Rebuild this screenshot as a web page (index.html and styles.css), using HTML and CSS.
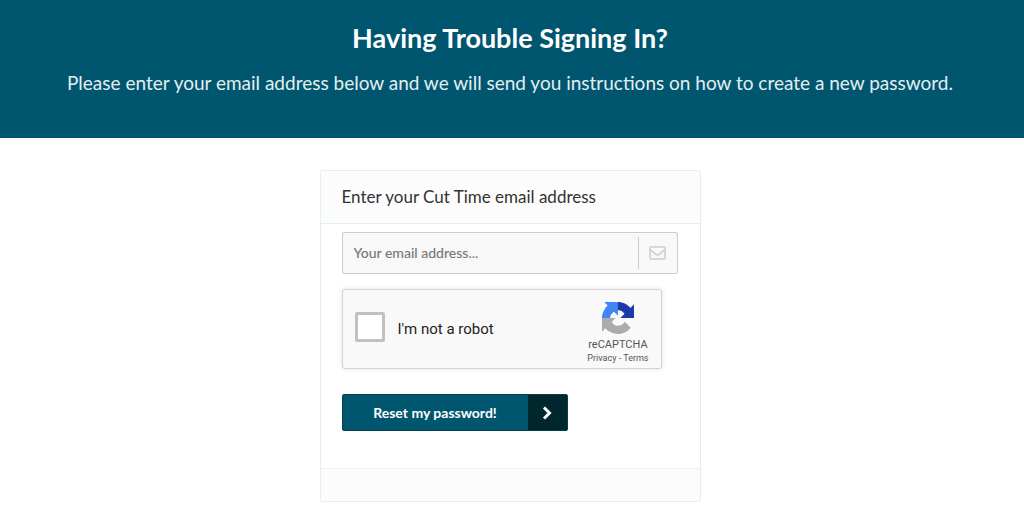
FILE: index.html
```html
<!DOCTYPE html>
<html lang="en">
<head>
  <meta charset="UTF-8" />
  <meta name="viewport" content="width=device-width, initial-scale=1.0" />
  <title>Having Trouble Signing In?</title>
  <link rel="stylesheet" href="styles.css">
</head>
<body>
  <header class="banner">
    <h1>Having Trouble Signing In?</h1>
    <p>Please enter your email address below and we will send you instructions on how to create a new password.</p>
  </header>

  <main class="page">
    <form class="card">
      <div class="card-header">
        <label for="email">Enter your Cut Time email address</label>
      </div>

      <div class="card-body">
        <div class="email-field">
          <input type="email" id="email" name="email" placeholder="Your email address...">
          <span class="email-icon">
            <svg width="17" height="14" viewBox="0 0 17 14" fill="none" stroke="currentColor" stroke-width="1.5" stroke-linejoin="round" aria-hidden="true">
              <rect x="1" y="1" width="15" height="12" rx="1" />
              <path d="M1 3.5l5.500 4.600c1.300 1 2.700 1 4 0L16 3.500" />
            </svg>
          </span>
        </div>

        <div class="captcha">
          <input type="checkbox" id="robot" name="robot">
          <label for="robot">I'm not a robot</label>
          <div class="captcha-brand">
            <svg width="32" height="32" viewBox="0 0 64 64" aria-hidden="true">
              <path fill="#1c3aa9" d="M64 31.955l-.033-1.37V4.687l-7.16 7.16C50.948 4.674 42.033.093 32.05.093c-10.4 0-19.622 4.96-25.458 12.64l11.736 11.86a15.55 15.55 0 0 1 4.754-5.334c2.05-1.6 4.952-2.906 8.968-2.906.485 0 .86.057 1.135.163 4.976.393 9.288 3.14 11.828 7.124l-8.307 8.307L64 31.953" />
              <path fill="#4285f4" d="M31.862.094l-1.37.033H4.594l7.16 7.16C4.58 13.147 0 22.06 0 32.046c0 10.4 4.96 19.622 12.64 25.458L24.5 45.768a15.55 15.55 0 0 1-5.334-4.754c-1.6-2.05-2.906-4.952-2.906-8.968 0-.485.057-.86.163-1.135.393-4.976 3.14-9.288 7.124-11.828l8.307 8.307L31.86.095" />
              <path fill="#ababab" d="M.001 32.045l.033 1.37v25.898l7.16-7.16c5.86 7.173 14.774 11.754 24.76 11.754 10.4 0 19.622-4.96 25.458-12.64l-11.736-11.86a15.55 15.55 0 0 1-4.754 5.334c-2.05 1.6-4.952 2.906-8.968 2.906-.485 0-.86-.057-1.135-.163-4.976-.393-9.288-3.14-11.828-7.124l8.307-8.307c-10.522.04-22.4.066-27.295-.005" />
            </svg>
            <span class="captcha-name">reCAPTCHA</span>
            <span class="captcha-links"><a href="#privacy">Privacy</a> - <a href="#terms">Terms</a></span>
          </div>
        </div>

        <button type="submit" class="reset-button">
          <span class="reset-text">Reset my password!</span>
          <span class="reset-arrow">
            <svg width="11" height="14" viewBox="0 0 11 14" fill="none" stroke="currentColor" stroke-width="3" aria-hidden="true">
              <path d="M2 1.500L7.500 7L2 12.500" />
            </svg>
          </span>
        </button>
      </div>

      <div class="card-footer"></div>
    </form>
  </main>
</body>
</html>
```
FILE: styles.css
```css
* {
  box-sizing: border-box;
}

body {
  margin: 0;
  background: #fff;
  color: #333;
  font-family: Lato, "Open Sans", sans-serif;
}

/* banner */
.banner {
  background: #00566f;
  color: #fff;
  padding: 19px 4px 39px 0;
  text-align: center;
}

.banner h1 {
  margin: 0;
  font-size: 27px;
  line-height: 38px;
  font-weight: 700;
}

.banner p {
  margin: 10px 0 0;
  color: #e4eef1;
  font-size: 19px;
  line-height: 32px;
  font-weight: 400;
}

/* card */
.page {
  padding: 32px 4px 28px 0;
}

.card {
  max-width: 381px;
  margin: 0 auto;
  border: 1px solid #dff0ed;
  border-radius: 2px;
}

.card-header {
  padding: 14px 21px;
  background: #fcfcfc;
  border-bottom: 1px solid #dff0ed;
  font-size: 17px;
  line-height: 24px;
}

.card-body {
  padding: 8px 22px 37px 21px;
}

.card-footer {
  height: 33px;
  background: #fcfcfc;
  border-top: 1px solid #e8f2f2;
}

/* email */
.email-field {
  display: flex;
  align-items: center;
  height: 42px;
  background: #f8f8f8;
  border: 1px solid #ccc;
  border-radius: 2px;
}

.email-field input {
  flex: 1;
  min-width: 0;
  height: 100%;
  padding: 0 11px 2px;
  border: 0;
  background: transparent;
  font: 500 14px Lato, "Open Sans", sans-serif;
}

.email-field input::placeholder {
  color: #777;
}

.email-icon {
  display: flex;
  align-items: center;
  justify-content: center;
  width: 39px;
  height: 32px;
  border-left: 1px solid #ccc;
  color: #ccc;
}

/* captcha */
.captcha {
  display: flex;
  align-items: center;
  max-width: 320px;
  height: 80px;
  margin: 15px 0 25px;
  padding: 0 12px;
  background: #f9f9f9;
  border: 1px solid #d3d3d3;
  border-radius: 3px;
  box-shadow: 0 0 4px 1px rgba(0, 0, 0, 0.08);
  font-family: Roboto, sans-serif;
}

.captcha input {
  appearance: none;
  width: 30px;
  height: 30px;
  margin: 0 13px 4px 0;
  background: #fff;
  border: 3px solid #c1c1c1;
  border-radius: 2px;
}

.captcha input:checked {
  background: #4285f4;
}

.captcha label {
  flex: 1;
  font-size: 15px;
  color: #222;
}

.captcha-brand {
  display: flex;
  flex-direction: column;
  align-items: center;
  padding-top: 8px;
  color: #555;
}

.captcha-name {
  margin-top: 4px;
  font-size: 11px;
  line-height: 14px;
}

.captcha-links {
  font-size: 9px;
  line-height: 12px;
}

.captcha-links a {
  color: inherit;
  text-decoration: none;
}

/* button */
.reset-button {
  display: flex;
  width: 226px;
  height: 37px;
  padding: 0;
  background: #00566f;
  border: 1px solid #00424f;
  border-radius: 2px;
  color: #fff;
  font: 700 14px Lato, "Open Sans", sans-serif;
  cursor: pointer;
}

.reset-text {
  flex: 1;
  align-self: center;
}

.reset-arrow {
  display: flex;
  align-items: center;
  justify-content: center;
  align-self: stretch;
  width: 39px;
  background: #00272d;
}
```
